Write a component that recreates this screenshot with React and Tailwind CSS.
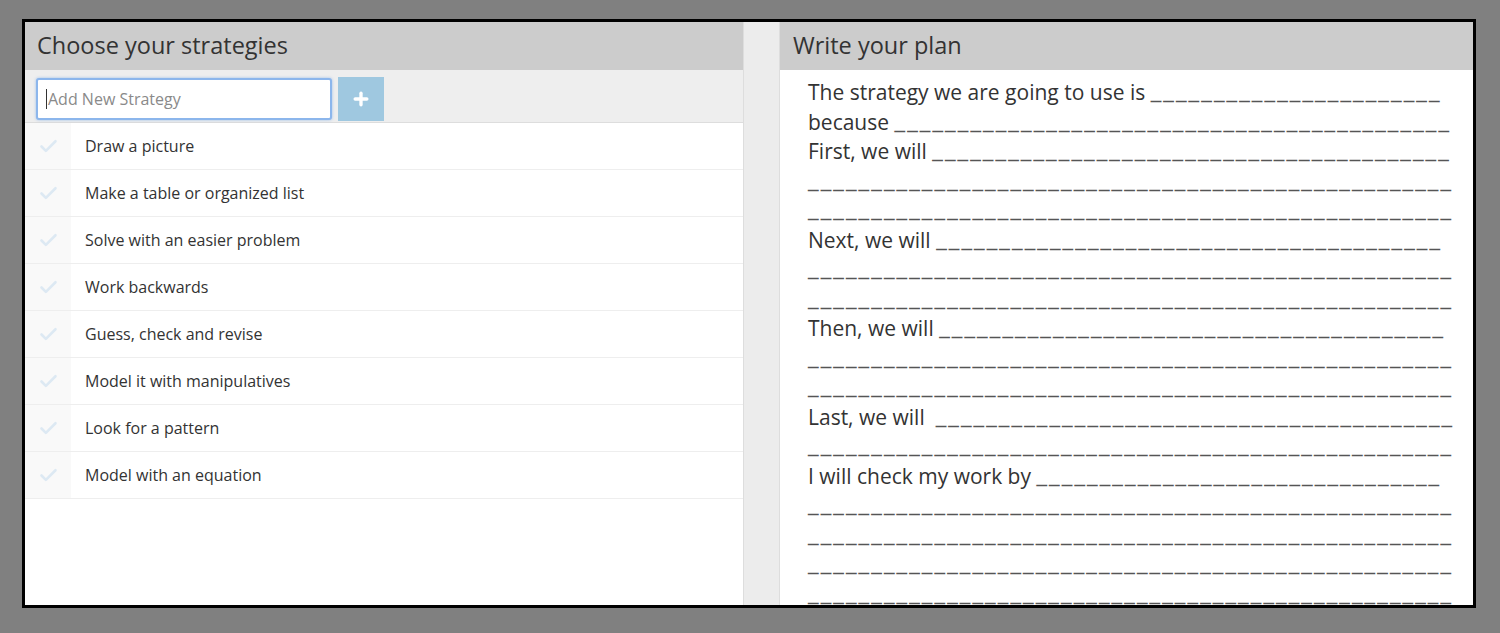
import React from 'react';
import { Check, Plus } from 'lucide-react';

const strategies = [
  'Draw a picture',
  'Make a table or organized list',
  'Solve with an easier problem',
  'Work backwards',
  'Guess, check and revise',
  'Model it with manipulatives',
  'Look for a pattern',
  'Model with an equation',
];

// label + number of blanks on each plan line
const planLines = [
  ['The strategy we are going to use is ', 23],
  ['because ', 44],
  ['First, we will ', 41],
  ['', 51],
  ['', 51],
  ['Next, we will ', 40],
  ['', 51],
  ['', 51],
  ['Then, we will ', 40],
  ['', 51],
  ['', 51],
  ['Last, we will\u00a0 ', 41],
  ['', 51],
  ['I will check my work by ', 32],
  ['', 51],
  ['', 51],
  ['', 51],
  ['', 51],
];

function StrategyRow({ label }) {
  return (
    <div className="flex h-[47px] shrink-0 border-b border-[#eeeeee]">
      <div className="w-[46px] bg-[#f9f9f9] flex items-center justify-center">
        <Check size={21} strokeWidth={3} className="text-[#dde9f3]" />
      </div>
      <div className="flex items-center pl-[14px] text-[16px] text-[#333]">{label}</div>
    </div>
  );
}

export default function App() {
  return (
    <div className="w-full h-[633px] bg-[#808080] pt-[19px] pl-[22px]" style={{ fontFamily: '"Open Sans", Lato, sans-serif' }}>
      <div className="w-[1454px] h-[589px] border-[3px] border-black bg-white flex overflow-hidden">
        {/* Strategies */}
        <div className="w-[718px] flex flex-col">
          <div className="h-[48px] shrink-0 bg-[#cccccc] flex items-center pl-[12px] text-[23.5px] text-[#333]">Choose your strategies</div>
          <div className="h-[53px] shrink-0 bg-[#eeeeee] border-b border-[#dddddd] flex items-start pt-[7px] pl-[11px] gap-[6px]">
            <div className="w-[296px] h-[42px] mt-[1px] bg-white border-2 border-[#8cb6ec] rounded-[3px] shadow-[0_0_3px_rgba(102,160,233,0.6)] flex items-center pl-[8px] text-[16px] text-[#8a8a8a]">
              <span className="w-px h-[20px] bg-[#333] mr-px" />
              Add New Strategy
            </div>
            <button className="w-[46px] h-[44px] bg-[#9fc8e0] flex items-center justify-center text-white">
              <Plus size={20} strokeWidth={4} />
            </button>
          </div>
          {strategies.map((s) => (
            <StrategyRow key={s} label={s} />
          ))}
        </div>

        {/* Divider */}
        <div className="w-[37px] shrink-0 bg-[#ececec] border-l border-r border-[#dddddd]" />

        {/* Plan */}
        <div className="flex-1 flex flex-col min-h-0">
          <div className="h-[48px] shrink-0 bg-[#cccccc] flex items-center pl-[13px] text-[23.5px] text-[#333]">Write your plan</div>
          <div className="pt-[8px] pl-[28px] text-[21px] leading-[29.5px] text-[#333]">
            {planLines.map(([label, n], i) => (
              <div key={i} className="h-[29.5px] whitespace-nowrap">
                {label}
                <span className="tracking-[2.15px] text-[#555] leading-none align-[3px] font-['DejaVu_Sans',sans-serif]">{'_'.repeat(n)}</span>
              </div>
            ))}
          </div>
        </div>
      </div>
    </div>
  );
}
